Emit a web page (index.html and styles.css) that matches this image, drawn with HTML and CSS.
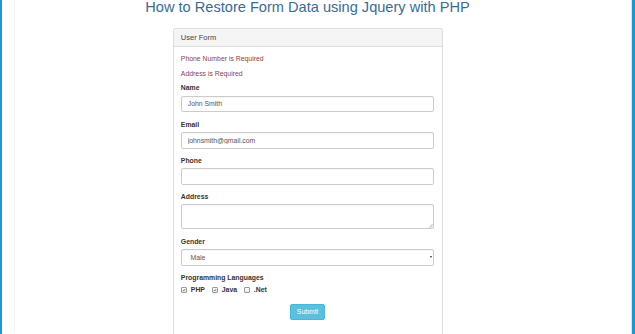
FILE: index.html
```html
<!DOCTYPE html>
<html lang="en">
<head>
<meta charset="utf-8">
<title>How to Restore Form Data using Jquery with PHP</title>
<link rel="stylesheet" href="styles.css">
</head>
<body>
<div class="frame">
  <div class="page">
    <h3 class="title">How to Restore Form Data using Jquery with PHP</h3>
    <div class="panel">
      <div class="panel-heading">User Form</div>
      <div class="panel-body">
        <div class="errors">
          <p class="error">Phone Number is Required</p>
          <p class="error">Address is Required</p>
        </div>
        <div class="form-group">
          <label class="lbl">Name</label>
          <input class="form-control" type="text" value="John Smith">
        </div>
        <div class="form-group">
          <label class="lbl">Email</label>
          <input class="form-control" type="text" value="johnsmith@gmail.com">
        </div>
        <div class="form-group">
          <label class="lbl">Phone</label>
          <input class="form-control" type="text" value="">
        </div>
        <div class="form-group">
          <label class="lbl">Address</label>
          <div class="ta-wrap">
            <textarea class="form-control ta"></textarea>
            <svg class="grip" width="5" height="5" viewBox="0 0 5 5"><path d="M4.6 1 L1 4.6 M4.6 2.8 L2.8 4.6" stroke="#8a8a8a" stroke-width="0.6" fill="none"/></svg>
          </div>
        </div>
        <div class="form-group">
          <label class="lbl">Gender</label>
          <div class="select-wrap">
            <select class="form-control sel"><option>Male</option><option>Female</option></select>
          </div>
        </div>
        <div class="form-group group-langs">
          <label class="lbl">Programming Languages</label>
          <div class="checks">
            <span class="check-item"><span class="cbox"><svg width="6" height="6" viewBox="0 0 6 6"><path d="M1.4 3.1 L2.6 4.3 L4.7 1.7" stroke="#222" stroke-width="0.9" fill="none"/></svg></span>PHP</span>
            <span class="check-item"><span class="cbox"><svg width="6" height="6" viewBox="0 0 6 6"><path d="M1.4 3.1 L2.6 4.3 L4.7 1.7" stroke="#222" stroke-width="0.9" fill="none"/></svg></span>Java</span>
            <span class="check-item"><span class="cbox"></span>.Net</span>
          </div>
        </div>
        <div class="actions">
          <button class="btn" type="button">Submit</button>
        </div>
      </div>
    </div>
  </div>
</div>
</body>
</html>
```
FILE: styles.css
```css
* { box-sizing: border-box; }
html, body {
  margin: 0;
  padding: 0;
  background: #fff;
  overflow: hidden;
}
body {
  font-family: "Liberation Sans", Arial, Helvetica, sans-serif;
  font-size: 6.86px;
  line-height: 9.8px;
  color: #333;
}
.frame {
  width: 635px;
  height: 334px;
  border-left: 2px solid #1a98d5;
  border-right: 3px solid #1a98d5;
  box-shadow: inset -1px 0 0 #cfe8f5;
  overflow: hidden;
}
.page {
  width: 611px;
  height: 100%;
  background: linear-gradient(to right, transparent 12px, #f3f3f3 12px, #f3f3f3 13px, transparent 13px);
}
.title {
  margin: -1px 0 0;
  font-size: 14.6px;
  line-height: 16px;
  font-weight: normal;
  text-align: center;
  color: #376c99;
}
.panel {
  width: 270px;
  margin: 13px auto 0;
  border: 1px solid #ddd;
  border-radius: 2px;
  background: #fff;
  box-shadow: 0 0.5px 0.5px rgba(0,0,0,.05);
  height: 400px;
}
.panel-heading {
  height: 18px;
  padding: 1px 7.35px 0;
  line-height: 16px;
  font-size: 7.5px;
  color: #444;
  background: #f5f5f5;
  border-bottom: 1px solid #ddd;
}
.panel-body {
  padding: 7.35px 7.35px;
}
.errors {
  display: flex;
  flex-direction: column;
  gap: 4.4px;
  margin-bottom: 5.1px;
}
.error {
  margin: 0;
  color: #8f3f3f;
}
.form-group {
  margin-bottom: 7.35px;
}
.lbl {
  display: block;
  font-weight: bold;
  margin-bottom: 2.45px;
  line-height: 9.8px;
}
.form-control {
  display: block;
  width: 100%;
  height: 16.66px;
  padding: 0 5.88px;
  font-family: inherit;
  font-size: 6.86px;
  color: #555;
  background: #fff;
  border: 1px solid #ccc;
  border-radius: 2px;
  box-shadow: inset 0 0.5px 0.5px rgba(0,0,0,.075);
  outline: none;
  margin: 0;
}
.ta-wrap { position: relative; }
.ta {
  height: 25px;
  resize: none;
  padding: 2.9px 5.88px;
}
.grip {
  position: absolute;
  right: 1px;
  bottom: 1px;
}
.select-wrap { position: relative; }
.sel {
  -webkit-appearance: none;
  appearance: none;
  padding-left: 8.6px;
}
.select-wrap::after {
  content: "";
  position: absolute;
  right: 2.2px;
  top: 7px;
  border-left: 1.6px solid transparent;
  border-right: 1.6px solid transparent;
  border-top: 2.6px solid #333;
}
.group-langs { margin-bottom: 9.5px; }
.checks {
  display: flex;
  align-items: center;
  gap: 6.8px;
  height: 9.8px;
  font-weight: bold;
  color: #333;
}
.check-item {
  display: inline-flex;
  align-items: center;
}
.cbox {
  width: 6px;
  height: 6px;
  margin-right: 4px;
  border: 0.6px solid #9a9a9a;
  border-radius: 1px;
  background: linear-gradient(#fdfdfd, #e6e6e6);
  display: inline-flex;
  align-items: center;
  justify-content: center;
}
.cbox svg { display: block; }
.actions {
  display: flex;
  justify-content: center;
}
.btn {
  height: 16px;
  padding: 0 5.88px;
  font-family: inherit;
  font-size: 6.86px;
  line-height: 14px;
  color: #fff;
  background: #5bc0de;
  border: 1px solid #46b8da;
  border-radius: 2px;
  cursor: pointer;
}
```
